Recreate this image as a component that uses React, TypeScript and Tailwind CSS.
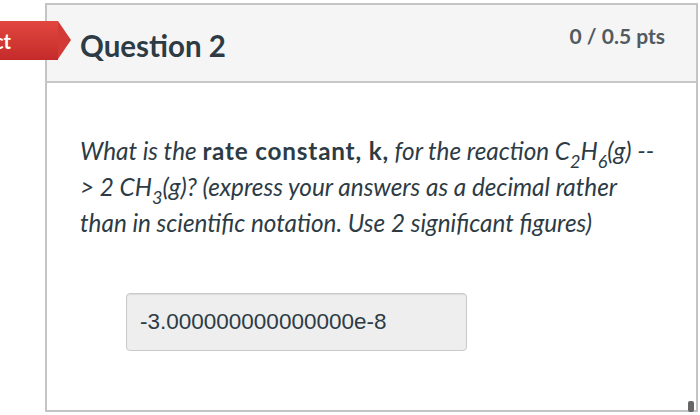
import React from "react";

export default function App() {
  return (
    <div className="relative w-[700px] h-[415px] bg-white overflow-hidden" style={{ fontFamily: "Lato, 'Noto Sans', sans-serif" }}>
      <div className="ml-[45px] mt-[3px] w-[653px] h-[409px] border-2 border-[#c4c4c4] flex flex-col">
        <div className="h-[78px] shrink-0 bg-[#f5f5f5] border-b-2 border-[#c8c8c8] flex items-start justify-between pl-[33px] pr-[31px]">
          <div className="mt-[23px] text-[29.5px] font-bold text-[#2d3b45] leading-[36px]">Question 2</div>
          <div className="mt-[16px] text-[21px] font-bold text-[#505a60] leading-[30px]">0 / 0.5 pts</div>
        </div>
        <div className="pl-[33px] pt-[50px] text-[24.3px] leading-[36px] italic text-[#2d3b45]">
          <div className="whitespace-nowrap">
            What is the <span className="not-italic font-bold tracking-[0.8px]">rate constant, k,</span> for the reaction C<sub className="text-[18px] align-[-3px] leading-none">2</sub>H<sub className="text-[18px] align-[-3px] leading-none">6</sub>(g) --
          </div>
          <div className="whitespace-nowrap">
            &gt; 2 CH<sub className="text-[18px] align-[-3px] leading-none">3</sub>(g)? (express your answers as a decimal rather
          </div>
          <div className="whitespace-nowrap">than in scientific notation. Use 2 significant figures)</div>
          <div className="mt-[52px] ml-[46px] w-[341px] h-[58px] rounded-[4px] border border-[#c9c9c9] bg-[#eeeeee] shadow-[inset_0_1px_1px_rgba(0,0,0,0.08)] flex items-center pl-[13px] not-italic text-[22.5px] text-[#2d3b45]" style={{ fontFamily: "'Liberation Sans', Arial, sans-serif" }}>
            -3.000000000000000e-8
          </div>
        </div>
      </div>
      <div className="absolute left-0 top-[21px] h-[39px] flex">
        <div className="w-[58px] h-full bg-gradient-to-b from-[#e2473f] to-[#c42a2a] flex items-center justify-end pr-[47px] text-white text-[20px] font-bold overflow-hidden">
          <span className="whitespace-nowrap">Incorrect</span>
        </div>
        <div className="w-0 h-0 border-t-[19.5px] border-b-[19.5px] border-l-[13px] border-t-transparent border-b-transparent border-l-[#d33a36]" />
      </div>
      <div className="absolute left-[688px] top-[401px] w-[6px] h-[11px] rounded-[2px] bg-[#666]" />
    </div>
  );
}
